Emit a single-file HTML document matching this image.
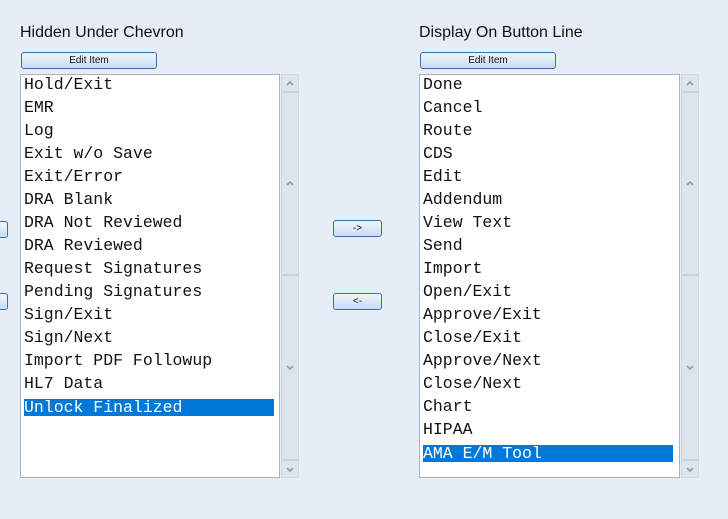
<!DOCTYPE html>
<html><head><style>
body{margin:0;width:728px;height:519px;background:#e6edf6;position:relative;overflow:hidden;font-family:"Liberation Sans",sans-serif}
.h{position:absolute;top:24px;font-size:16px;color:#111}
.btn{position:absolute;height:15px;border:1px solid #3c6fa8;border-radius:3px;background:linear-gradient(#f0f5fb,#c9dcf0);font-size:10px;text-align:center;line-height:15px;color:#111}
.list{position:absolute;top:74px;height:402px;background:#fff;border:1px solid #a9b4c0;font-family:"Liberation Mono",monospace;font-size:16.5px;color:#111}
.list div{position:absolute;left:3px;height:17px;line-height:17px;white-space:pre}
.list .sel{background:#0078d7;color:#fff;width:250px}
.sb{position:absolute;top:74px;width:16px;height:402px;background:#dde4ee;border:1px solid #cfd6de}
.sb div{position:absolute;left:0;width:16px;border-bottom:2px solid #cbd2da;display:flex;align-items:center;justify-content:center}
</style></head><body>
<svg width="0" height="0" style="position:absolute"><defs>
<symbol id="u" viewBox="0 0 8 5"><path d="M1 4L4 1L7 4" stroke="#8aa0b4" stroke-width="1.6" fill="none"/></symbol>
<symbol id="d" viewBox="0 0 8 5"><path d="M1 1L4 4L7 1" stroke="#8aa0b4" stroke-width="1.6" fill="none"/></symbol>
</defs></svg>
<div class="h" style="left:20px">Hidden Under Chevron</div>
<div class="h" style="left:419px">Display On Button Line</div>
<div class="btn" style="left:21px;top:52px;width:134px">Edit Item</div>
<div class="btn" style="left:420px;top:52px;width:134px">Edit Item</div>
<div class="btn" style="left:333px;top:220px;width:47px">-&gt;</div>
<div class="btn" style="left:333px;top:293px;width:47px">&lt;-</div>
<div class="btn" style="left:-40px;top:221px;width:46px"></div>
<div class="btn" style="left:-40px;top:293px;width:46px"></div>
<div class="list" style="left:20px;width:258px">
<div style="top:1px">Hold/Exit</div><div style="top:24px">EMR</div><div style="top:47px">Log</div><div style="top:70px">Exit w/o Save</div><div style="top:93px">Exit/Error</div><div style="top:116px">DRA Blank</div><div style="top:139px">DRA Not Reviewed</div><div style="top:162px">DRA Reviewed</div><div style="top:185px">Request Signatures</div><div style="top:208px">Pending Signatures</div><div style="top:231px">Sign/Exit</div><div style="top:254px">Sign/Next</div><div style="top:277px">Import PDF Followup</div><div style="top:300px">HL7 Data</div><div class="sel" style="top:324px">Unlock Finalized</div>
</div>
<div class="list" style="left:419px;width:259px">
<div style="top:1px">Done</div><div style="top:24px">Cancel</div><div style="top:47px">Route</div><div style="top:70px">CDS</div><div style="top:93px">Edit</div><div style="top:116px">Addendum</div><div style="top:139px">View Text</div><div style="top:162px">Send</div><div style="top:185px">Import</div><div style="top:208px">Open/Exit</div><div style="top:231px">Approve/Exit</div><div style="top:254px">Close/Exit</div><div style="top:277px">Approve/Next</div><div style="top:300px">Close/Next</div><div style="top:323px">Chart</div><div style="top:346px">HIPAA</div><div class="sel" style="top:370px">AMA E/M Tool</div>
</div>
<div class="sb" style="left:281px"><div style="top:0;height:16px"><svg width="8" height="5"><use href="#u"/></svg></div><div style="top:18px;height:181px"><svg width="8" height="5"><use href="#u"/></svg></div><div style="top:201px;height:183px"><svg width="8" height="5"><use href="#d"/></svg></div><div style="top:386px;height:16px;border:0"><svg width="8" height="5"><use href="#d"/></svg></div></div>
<div class="sb" style="left:681px"><div style="top:0;height:16px"><svg width="8" height="5"><use href="#u"/></svg></div><div style="top:18px;height:181px"><svg width="8" height="5"><use href="#u"/></svg></div><div style="top:201px;height:183px"><svg width="8" height="5"><use href="#d"/></svg></div><div style="top:386px;height:16px;border:0"><svg width="8" height="5"><use href="#d"/></svg></div></div>
</body></html>
